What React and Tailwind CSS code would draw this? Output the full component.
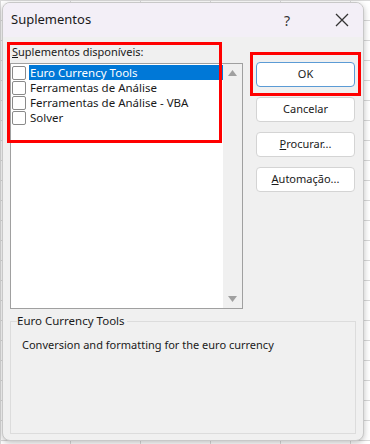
import React from 'react';

const font = { fontFamily: '"Segoe UI", "Noto Sans", sans-serif' };

const items = [
  'Euro Currency Tools',
  'Ferramentas de Análise',
  'Ferramentas de Análise - VBA',
  'Solver',
];

const Btn = ({ children, primary }) => (
  <button
    className={
      primary
        ? 'h-[25px] w-[99px] rounded-[4px] border border-[#5b9bd5] bg-white text-[11px] text-[#1a1a1a]'
        : 'h-[25px] w-[99px] rounded-[4px] border border-[#d4d4d4] bg-white text-[11px] text-[#1a1a1a]'
    }
  >
    {children}
  </button>
);

export default function App() {
  return (
    <div
      className="w-[370px] h-[444px] overflow-hidden bg-white bg-[linear-gradient(#d9d9d9_1px,transparent_1px),linear-gradient(90deg,#d9d9d9_1px,transparent_1px)] bg-[size:70px_20px] p-[2px] pr-[6px] pb-[3px]"
      style={font}
    >
      <div className="h-full w-full rounded-[8px] border border-[#c8c8c8] bg-[#f0f0f0] flex flex-col overflow-hidden shadow-[0_2px_6px_rgba(0,0,0,0.25)]">
        {/* title bar */}
        <div className="h-[34px] shrink-0 bg-[#f3eff7] flex items-center pl-[8px] pr-[14px]">
          <span className="text-[13px] text-[#1a1a1a] flex-1">Suplementos</span>
          <span className="text-[14px] text-[#333] mr-[45px]">?</span>
          <svg width="14" height="14" viewBox="0 0 14 14">
            <path d="M1 1L13 13M13 1L1 13" stroke="#333" strokeWidth="1.3" fill="none" />
          </svg>
        </div>

        <div className="flex pl-[7px] pt-[3px]">
          {/* left column */}
          <div className="relative flex flex-col w-[233px]">
            <div className="absolute left-[-3px] top-[2px] w-[215px] h-[101px] border-[3px] border-[#ff0000] pointer-events-none z-10" />
            <div className="h-[23px] flex items-center pl-[2px] pt-[2px] text-[11px] text-[#1a1a1a]">
              <span className="underline">S</span>uplementos disponíveis:
            </div>
            <div className="h-[246px] border border-[#a0a0a0] bg-white flex">
              <div className="flex-1 flex flex-col pt-[1px]">
                {items.map((t, i) => (
                  <div key={t} className="h-[15px] flex items-center">
                    <div className="w-[14px] h-[14px] ml-[1px] rounded-[2px] border border-[#8a8a8a] bg-white shrink-0" />
                    <div
                      className={
                        i === 0
                          ? 'ml-[3px] h-[15px] flex-1 bg-[#0078d7] text-white text-[11.5px] leading-[15px] pl-[1px]'
                          : 'ml-[3px] h-[15px] flex-1 text-[#1a1a1a] text-[11.5px] leading-[15px] pl-[1px]'
                      }
                    >
                      {t}
                    </div>
                  </div>
                ))}
              </div>
              <div className="w-[19px] bg-[#f0f0f0] flex flex-col items-center justify-between py-[6px]">
                <svg width="9" height="6" viewBox="0 0 9 6">
                  <path d="M0 6L4.5 0L9 6Z" fill="#a0a0a0" />
                </svg>
                <svg width="9" height="6" viewBox="0 0 9 6">
                  <path d="M0 0L9 0L4.5 6Z" fill="#a0a0a0" />
                </svg>
              </div>
            </div>
          </div>

          {/* right column */}
          <div className="relative ml-[13px] pt-[22px] flex flex-col gap-[10px]">
            <div className="absolute left-[-6px] top-[12px] w-[111px] h-[44px] border-[3px] border-[#ff0000] pointer-events-none" />
            <Btn primary>OK</Btn>
            <Btn>Cancelar</Btn>
            <Btn>
              <span className="underline">P</span>rocurar...
            </Btn>
            <Btn>
              <span className="underline">A</span>utomação...
            </Btn>
          </div>
        </div>

        {/* group box */}
        <div className="relative mx-[7px] mt-[12px] h-[113px] border border-[#dcdcdc]">
          <span className="absolute left-[6px] top-[-10px] bg-[#f0f0f0] pr-[2px] text-[11.5px] text-[#1a1a1a]">
            Euro Currency Tools
          </span>
          <div className="pl-[11px] pt-[15px] text-[11px] text-[#1a1a1a]">
            Conversion and formatting for the euro currency
          </div>
        </div>
      </div>
    </div>
  );
}
